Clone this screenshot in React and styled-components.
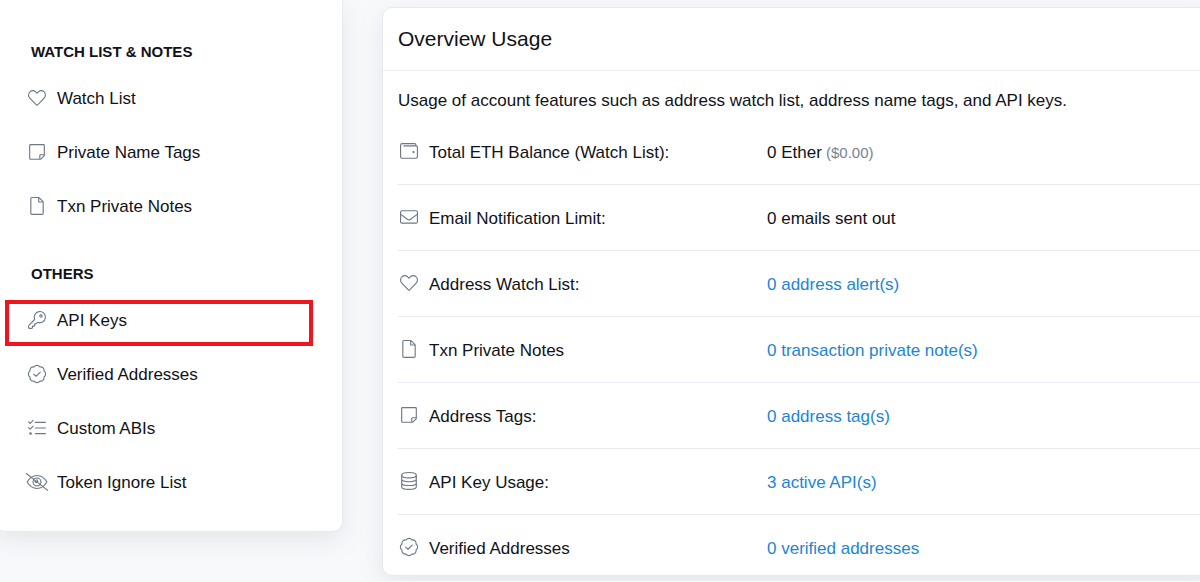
import React from "react";
import styled, { createGlobalStyle, css } from "styled-components";

const GlobalStyle = createGlobalStyle`
  *, *::before, *::after { box-sizing: border-box; }
  body {
    margin: 0;
    background: #f8f9fb;
    color: #111217;
    font-family: "Liberation Sans", Arial, sans-serif;
    font-size: 17px;
    line-height: 23px;
  }
`;

const Page = styled.div`
  display: flex;
  align-items: flex-start;
  gap: 39px;
  overflow-x: clip;
  padding-bottom: 5px;
`;

const cardStyle = css`
  background: #fff;
  border: 1px solid #e6e9f0;
  border-radius: 10px;
  box-shadow: 0 8px 24px rgba(110, 118, 135, 0.14);
`;

const Sidebar = styled.aside`
  ${cardStyle}
  flex: none;
  width: 348px;
  margin-left: -5px;
  padding: 41px 30px 22px;
  border-top: 0;
  border-top-left-radius: 0;
  border-top-right-radius: 0;
`;

const NavGroup = styled.nav`
  & + & { margin-top: 30px; }
`;

const NavHeading = styled.h2`
  margin: 0;
  padding-left: 5px;
  font-size: 15px;
  line-height: 22px;
  font-weight: 700;
  text-transform: uppercase;
`;

const NavList = styled.ul`
  margin: 8px 0 0;
  padding: 0;
  list-style: none;
`;

const NavLink = styled.a`
  position: relative;
  display: flex;
  align-items: center;
  gap: 9px;
  height: 54px;
  color: inherit;
  text-decoration: none;

  ${({ $highlighted }) => $highlighted && css`
    &::after {
      content: "";
      position: absolute;
      inset: 7px -1px 1px -21px;
      border: 4px solid #ed1520;
    }
  `}
`;

const Card = styled.main`
  ${cardStyle}
  flex: 1;
  min-width: 0;
  margin: 7px -16px 0 0;
`;

const CardHeader = styled.header`
  padding: 18px 15px;
  border-bottom: 1px solid #e7eaf3;
`;

const Title = styled.h1`
  margin: 0;
  font-size: 21px;
  line-height: 26px;
  font-weight: 400;
`;

const CardBody = styled.div`
  padding: 18px 15px 0;
`;

const Intro = styled.p`
  margin: 0;
`;

const UsageTable = styled.table`
  width: 100%;
  margin-top: 7px;
  border-collapse: separate;
  border-spacing: 0;
  text-align: left;

  th, td {
    padding: 22px 0 20px;
    border-bottom: 1px solid #e7eaf3;
    font-weight: 400;
  }
  th { width: 369px; }
  tr:last-child > * {
    padding-bottom: 15px;
    border-bottom: 0;
  }
`;

const Label = styled.span`
  display: flex;
  align-items: flex-start;
  gap: 9px;
`;

const ValueLink = styled.a`
  color: #2185d5;
  text-decoration: none;
`;

const Muted = styled.span`
  color: #77838f;
  font-size: 15px;
`;

const IconSvg = styled.svg`
  flex: none;
  width: 22px;
  height: 20px;
  overflow: visible;
  fill: none;
  stroke: #6c7886;
  stroke-width: 32;
  stroke-linecap: round;
  stroke-linejoin: round;

  .solid { fill: #6c7886; stroke: none; }
`;

const shapes = {
  heart: (
    <path className="solid" d="M462.3 62.7c-54.5-46.4-136-38.7-186.6 13.5L256 96.6l-19.7-20.3C195.5 34.1 113.2 8.7 49.7 62.7c-62.8 53.6-66.1 149.8-9.9 207.8l193.5 199.8c6.2 6.4 14.4 9.7 22.6 9.7 8.2 0 16.4-3.2 22.6-9.7L472 270.5c56.4-58 53.1-154.2-9.7-207.8zm-13.1 185.6L256.4 448.1 62.8 248.3c-38.4-39.6-46.4-115.1 7.7-161.2 54.8-46.8 119.2-12.9 142.8 11.5l42.7 44.1 42.7-44.1c23.2-24 88.2-58 142.8-11.5 54 46 46.1 121.5 7.7 161.2z" />
  ),
  note: (
    <path d="M72 48H440a24 24 0 0 1 24 24V348a32 32 0 0 1-10 23L371 454a32 32 0 0 1-23 10H72a24 24 0 0 1-24-24V72a24 24 0 0 1 24-24ZM336 462V360a24 24 0 0 1 24-24H462" />
  ),
  file: (
    <path d="M112 16H300a32 32 0 0 1 23 10L422 125a32 32 0 0 1 10 23V464a32 32 0 0 1-32 32H112a32 32 0 0 1-32-32V48a32 32 0 0 1 32-32ZM304 18V136a8 8 0 0 0 8 8H430" />
  ),
  key: (
    <>
      <path d="M270 322A160 160 0 1 0 190 242L30 402a48 48 0 0 0-14 34V472a24 24 0 0 0 24 24H104a24 24 0 0 0 24-24V432H168a24 24 0 0 0 24-24V368H224Z" />
      <circle cx="368" cy="144" r="34" />
    </>
  ),
  badge: (
    <>
      <path d="M456 173A98 98 0 0 1 456 339A98 98 0 0 1 339 456A98 98 0 0 1 173 456A98 98 0 0 1 56 339A98 98 0 0 1 56 173A98 98 0 0 1 173 56A98 98 0 0 1 339 56A98 98 0 0 1 456 173Z" />
      <path d="M164 260L228 320L350 202" />
    </>
  ),
  tasks: (
    <>
      <path d="M208 96H496M208 256H496M208 416H496M16 84L64 128L146 42M16 244L64 288L146 202" />
      <circle className="solid" cx="72" cy="416" r="36" />
    </>
  ),
  eyeSlash: (
    <>
      <path d="M-24 256C48 134 142 72 256 72S464 134 536 256C464 378 370 440 256 440S48 378-24 256Z" />
      <circle cx="256" cy="256" r="112" />
      <path d="M250 192a40 40 0 1 1-52 52M-48 16L560 496" />
    </>
  ),
  wallet: (
    <>
      <path d="M112 112H448a48 48 0 0 1 48 48V416a48 48 0 0 1-48 48H64a48 48 0 0 1-48-48V96a48 48 0 0 1 48-48H408a48 48 0 0 1 48 48" />
      <circle className="solid" cx="384" cy="288" r="32" />
    </>
  ),
  envelope: (
    <>
      <rect x="16" y="80" width="480" height="352" rx="40" />
      <path d="M16 176L208 322Q256 358 304 322L496 176" />
    </>
  ),
  database: (
    <>
      <ellipse cx="256" cy="92" rx="208" ry="76" />
      <path d="M48 92V420c0 42 93 76 208 76s208-34 208-76V92M48 201c0 42 93 76 208 76s208-34 208-76M48 310c0 42 93 76 208 76s208-34 208-76" />
    </>
  ),
};

function Icon({ name }) {
  return (
    <IconSvg viewBox="-57 -28 626 569" aria-hidden="true">
      {shapes[name]}
    </IconSvg>
  );
}

const navGroups = [
  {
    title: "Watch List & Notes",
    items: [
      { icon: "heart", label: "Watch List" },
      { icon: "note", label: "Private Name Tags" },
      { icon: "file", label: "Txn Private Notes" },
    ],
  },
  {
    title: "Others",
    items: [
      { icon: "key", label: "API Keys", highlighted: true },
      { icon: "badge", label: "Verified Addresses" },
      { icon: "tasks", label: "Custom ABIs" },
      { icon: "eyeSlash", label: "Token Ignore List" },
    ],
  },
];

const usageRows = [
  { icon: "wallet", label: "Total ETH Balance (Watch List):", value: "0 Ether", note: "($0.00)" },
  { icon: "envelope", label: "Email Notification Limit:", value: "0 emails sent out" },
  { icon: "heart", label: "Address Watch List:", value: "0 address alert(s)", link: true },
  { icon: "file", label: "Txn Private Notes", value: "0 transaction private note(s)", link: true },
  { icon: "note", label: "Address Tags:", value: "0 address tag(s)", link: true },
  { icon: "database", label: "API Key Usage:", value: "3 active API(s)", link: true },
  { icon: "badge", label: "Verified Addresses", value: "0 verified addresses", link: true },
];

export default function App() {
  return (
    <>
      <GlobalStyle />
      <Page>
        <Sidebar>
          {navGroups.map((group) => (
            <NavGroup key={group.title} aria-label={group.title}>
              <NavHeading>{group.title}</NavHeading>
              <NavList>
                {group.items.map((item) => (
                  <li key={item.label}>
                    <NavLink href="#" $highlighted={item.highlighted}>
                      <Icon name={item.icon} />
                      {item.label}
                    </NavLink>
                  </li>
                ))}
              </NavList>
            </NavGroup>
          ))}
        </Sidebar>
        <Card>
          <CardHeader>
            <Title>Overview Usage</Title>
          </CardHeader>
          <CardBody>
            <Intro>
              Usage of account features such as address watch list, address name tags, and API keys.
            </Intro>
            <UsageTable>
              <tbody>
                {usageRows.map((row) => (
                  <tr key={row.label}>
                    <th scope="row">
                      <Label>
                        <Icon name={row.icon} />
                        {row.label}
                      </Label>
                    </th>
                    <td>
                      {row.link ? <ValueLink href="#">{row.value}</ValueLink> : row.value}
                      {row.note && <Muted> {row.note}</Muted>}
                    </td>
                  </tr>
                ))}
              </tbody>
            </UsageTable>
          </CardBody>
        </Card>
      </Page>
    </>
  );
}
